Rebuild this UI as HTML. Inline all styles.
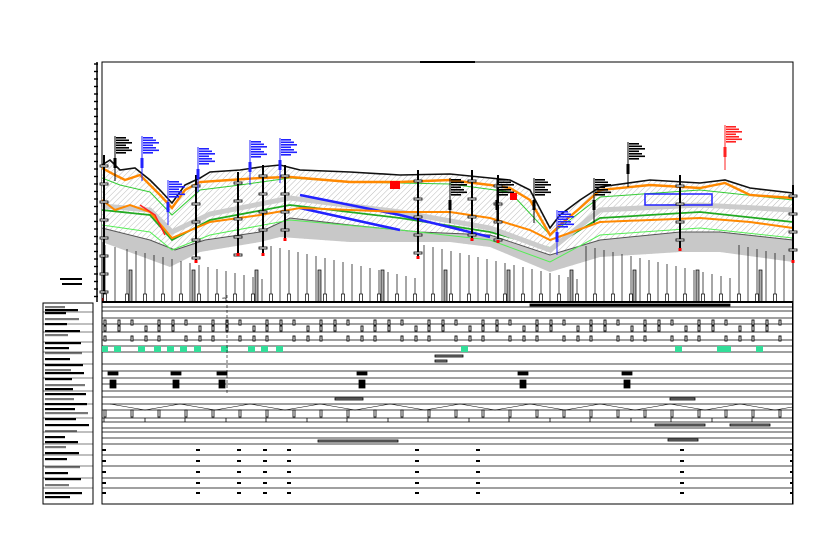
<!DOCTYPE html>
<html><head><meta charset="utf-8"><style>
html,body{margin:0;padding:0;background:#fff;width:835px;height:542px;overflow:hidden}
svg{display:block}
</style></head><body>
<svg id="s" width="835" height="542" viewBox="0 0 835 542" xmlns="http://www.w3.org/2000/svg" font-family="Liberation Sans, sans-serif">
<defs>
<pattern id="h" width="4" height="4" patternUnits="userSpaceOnUse" patternTransform="rotate(45)"><rect width="4" height="4" fill="#fff"/><line x1="0" y1="0" x2="0" y2="4" stroke="#bbb" stroke-width="1"/></pattern>
<clipPath id="tc"><rect x="102" y="300" width="691" height="205"/></clipPath>
</defs>
<rect x="102" y="62" width="691" height="442" fill="none" stroke="#000" stroke-width="1"/>
<line x1="420" y1="62" x2="475" y2="62" stroke="#000" stroke-width="2"/>
<line x1="97" y1="62" x2="97" y2="302" stroke="#000" stroke-width="1.5"/>
<polygon fill="url(#h)" points="102,165 110,160 120,170 135,168 150,180 160,190 172,203 185,185 200,178 210,172 240,170 260,167 280,165 300,170 350,172 400,175 450,174 490,178 510,180 530,190 550,228 560,215 580,200 600,187 650,180 700,183 725,180 750,188 793,193 793,262 720,252 680,252 600,257 550,272 490,247 450,242 350,242 280,237 260,242 230,247 200,252 170,267 102,242"/>
<polygon fill="#c8c8c8" points="102,228 150,240 175,250 205,240 260,232 290,218 350,225 420,232 490,235 550,255 600,240 680,232 720,232 793,240 793,262 720,252 680,252 600,257 550,272 490,247 450,242 350,242 280,237 260,242 230,247 200,252 170,267 102,242"/>
<polyline fill="none" stroke="#555" stroke-width="1" points="102,228 150,240 175,250 205,240 260,232 290,218 350,225 420,232 490,235 550,255 600,240 680,232 720,232 793,240"/>
<polyline id="gr" fill="none" stroke="#111" stroke-width="1.6" points="102,165 110,160 120,170 135,168 150,180 160,190 172,203 185,185 200,178 210,172 240,170 260,167 280,165 300,170 350,172 400,175 450,174 490,178 510,180 530,190 550,228 560,215 580,200 600,187 650,180 700,183 725,180 750,188 793,193"/>
<polyline fill="none" stroke="#3c3" stroke-width="1" points="102,178 120,185 150,192 172,215 200,190 240,185 290,178 350,182 450,184 510,192 550,235 600,197 700,190 793,200"/>
<polyline fill="none" stroke="#2a2" stroke-width="1.8" points="102,210 150,215 172,240 210,220 290,205 400,218 490,232 550,248 600,218 700,212 793,222"/>
<polyline fill="none" stroke="#5e5" stroke-width="1" points="102,225 150,232 172,250 210,235 290,220 400,230 490,240 550,262 600,235 700,228 793,238"/>
<polyline fill="none" stroke="#ccc" stroke-width="5" points="102,206 150,210 172,232 210,214 290,198 400,212 490,228 550,250 600,210 700,205 793,210"/>
<polyline fill="none" stroke="#22f" stroke-width="2.5" points="300,195 400,215 490,237"/>
<polyline fill="none" stroke="#22f" stroke-width="2.5" points="300,208 400,230"/>
<rect x="645" y="194" width="67" height="11" fill="none" stroke="#22f" stroke-width="1.5"/>
<polyline fill="none" stroke="#f80" stroke-width="2.4" points="102,168 115,175 125,180 140,175 150,185 160,195 172,208 185,190 200,182 230,180 260,178 290,177 350,182 400,182 450,180 490,185 510,188 530,200 550,235 560,225 580,208 600,190 650,185 700,188 725,183 750,195 793,198"/>
<polyline fill="none" stroke="#f80" stroke-width="2" points="102,200 115,210 130,205 150,212 172,238 210,222 260,215 300,208 400,212 450,212 490,218 530,230 550,240 600,222 700,218 750,222 793,228"/>
<polyline fill="none" stroke="#f22" stroke-width="1.5" points="140,205 155,215 165,235"/>
<g id="bh" stroke="#000" stroke-width="2"></g>
<g id="fl"></g>
<g id="vl" stroke="#000" stroke-width="0.7"></g>
<line x1="102" y1="302" x2="793" y2="302" stroke="#000" stroke-width="2"/>
<g id="tb" stroke="#000" stroke-width="0.8" clip-path="url(#tc)"></g>
<g id="lg"></g>
<rect x="43" y="303" width="50" height="201" fill="none" stroke="#000" stroke-width="1"/>
<line x1="227" y1="295" x2="227" y2="395" stroke="#000" stroke-width="0.6" stroke-dasharray="3,2"/>
<text x="222" y="299" font-size="3">ollo</text>
</svg>
<script>
var NS="http://www.w3.org/2000/svg";
function el(p,t,a){var e=document.createElementNS(NS,t);for(var k in a)e.setAttribute(k,a[k]);p.appendChild(e);return e;}
var s=document.getElementById('s');
for(var y=64;y<300;y+=7.5){el(s,'line',{x1:94,y1:y,x2:98,y2:y,stroke:'#000','stroke-width':1.4});}
var bh=document.getElementById('bh');
[[104,155,300],[196,175,262],[238,172,255],[263,165,255],[285,165,240],[418,170,258],[472,170,240],[498,175,242],[680,175,250],[793,185,262]].forEach(function(b){
 el(bh,'line',{x1:b[0],y1:b[1],x2:b[0],y2:b[2]});
 for(var y=b[1]+10;y<b[2];y+=18){el(bh,'rect',{x:b[0]-4,y:y,width:8,height:2,fill:'#fff','stroke-width':0.8});}
 el(bh,'rect',{x:b[0]-1.5,y:b[2]-2,width:3,height:3,fill:'#f00',stroke:'none'});
});
var fl=document.getElementById('fl');
[[115,136,'#000'],[142,136,'#22f'],[168,180,'#22f'],[198,147,'#22f'],[250,140,'#22f'],[280,138,'#22f'],[628,142,'#000'],[534,178,'#000'],[497,178,'#000'],[594,178,'#000'],[557,210,'#22f'],[725,125,'#f22'],[450,178,'#000']].forEach(function(f){
 el(fl,'line',{x1:f[0],y1:f[1],x2:f[0],y2:f[1]+45,stroke:f[2],'stroke-width':1});
 for(var i=0;i<7;i++){el(fl,'rect',{x:f[0]+1,y:f[1]+1+i*2.5,width:10+(i%3)*3,height:1.6,fill:f[2]});}
 el(fl,'rect',{x:f[0]-1.5,y:f[1]+22,width:3,height:10,fill:f[2]});
});
el(fl,'rect',{x:390,y:181,width:10,height:8,fill:'#f00'});
el(fl,'rect',{x:510,y:193,width:7,height:7,fill:'#f00'});
var vl=document.getElementById('vl');
var xs=[];for(var x=105;x<792;x+=7+((x*11)%9)){xs.push(x);}
xs.forEach(function(x,i){var top=245+((i*37)%35);
 el(vl,'line',{x1:x,y1:top,x2:x,y2:302});
 if(i%2==0)el(vl,'rect',{x:x-1.5,y:294,width:3,height:8,fill:'#fff'});
 if(i%7==2)el(vl,'rect',{x:x+2,y:270,width:3,height:32,fill:'#aaa'});
});
var tb=document.getElementById('tb');
var rows=[307,311,318,324,332,340,346,352,364,371,378,384,391,397,404,410,418,422,428,432,438,444,455,466,478,488,504];
rows.forEach(function(y){el(tb,'line',{x1:102,y1:y,x2:793,y2:y});});
el(tb,'line',{x1:102,y1:303,x2:102,y2:504});
el(tb,'line',{x1:793,y1:303,x2:793,y2:504,'stroke-width':2});
el(tb,'rect',{x:530,y:304,width:200,height:2,fill:'#000'});
var tx=[];for(var x=104;x<790;x+=6+((x*7)%9)){tx.push(x);}
[320,326,336].forEach(function(y,r){tx.forEach(function(x,i){if((i+r)%4!=3)el(tb,'rect',{x:x,y:y,width:2,height:5,fill:'#fff','stroke-width':0.9});});});
[104,117,141,157,170,183,197,224,251,264,279,464,678,720,727,759].forEach(function(x){el(tb,'rect',{x:x-3,y:346,width:7,height:6,fill:'#3d9','stroke':'none'});});
tx.forEach(function(x,i){if(i%2==0)el(tb,'rect',{x:x,y:410,width:2,height:7,fill:'#fff'});if(i%3==0)el(tb,'line',{x1:x,y1:418,x2:x,y2:422});});
[113,176,222,362,523,627].forEach(function(x){el(tb,'rect',{x:x-5,y:372,width:10,height:3,fill:'#000'});el(tb,'rect',{x:x-3,y:380,width:6,height:8,fill:'#000'});});
[[435,355,28],[435,360,12],[335,398,28],[670,398,25],[318,440,80],[668,439,30],[655,424,50],[730,424,40]].forEach(function(r){el(tb,'rect',{x:r[0],y:r[1],width:r[2],height:2,fill:'#888'});});
[102,196,237,263,287,415,476,680,790].forEach(function(x){[450,461,472,483,493].forEach(function(y){el(tb,'rect',{x:x,y:y-1,width:4,height:2,fill:'#000',stroke:'none'});});});
for(var x=110;x<760;x+=70){el(tb,'line',{x1:x,y1:404,x2:x+35,y2:410,'stroke-width':0.5});el(tb,'line',{x1:x+35,y1:410,x2:x+70,y2:404,'stroke-width':0.5});}
var lg=document.getElementById('lg');
var ly=[306,309,312,318,323,330,334,342,347,352,358,364,369,372,378,384,388,393,398,403,408,412,418,424,430,436,441,446,452,458,466,472,478,484,492,496];
ly.forEach(function(y,i){el(lg,'rect',{x:45,y:y,width:20+((i*13)%25),height:2.2,fill:i%3==0?'#777':'#000'});});
[312,324,332,342,352,364,378,391,404,418,432,444,455,466,478,488].forEach(function(y){el(lg,'line',{x1:43,y1:y,x2:93,y2:y,stroke:'#000','stroke-width':0.6});});
el(lg,'rect',{x:60,y:278,width:22,height:2,fill:'#000'});el(lg,'rect',{x:62,y:283,width:20,height:2,fill:'#000'});
</script>
</body></html>
